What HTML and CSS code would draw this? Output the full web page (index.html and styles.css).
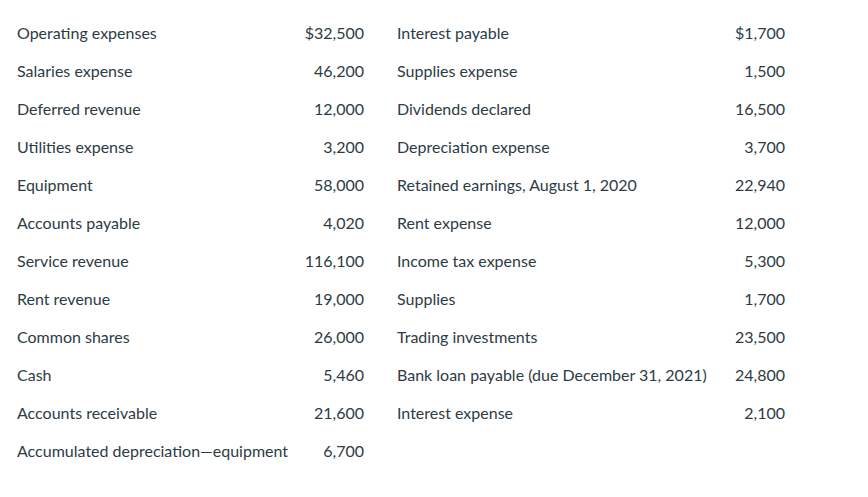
FILE: index.html
```html
<!DOCTYPE html>
<html>
<head>
<meta charset="utf-8">
<link rel="stylesheet" href="styles.css">
</head>
<body>
<div class="sheet">
  <div class="cell name">Operating expenses</div><div class="cell amt">$32,500</div><div class="cell name2">Interest payable</div><div class="cell amt2">$1,700</div>
  <div class="cell name">Salaries expense</div><div class="cell amt">46,200</div><div class="cell name2">Supplies expense</div><div class="cell amt2">1,500</div>
  <div class="cell name">Deferred revenue</div><div class="cell amt">12,000</div><div class="cell name2">Dividends declared</div><div class="cell amt2">16,500</div>
  <div class="cell name">Utilities expense</div><div class="cell amt">3,200</div><div class="cell name2">Depreciation expense</div><div class="cell amt2">3,700</div>
  <div class="cell name">Equipment</div><div class="cell amt">58,000</div><div class="cell name2">Retained earnings, August 1, 2020</div><div class="cell amt2">22,940</div>
  <div class="cell name">Accounts payable</div><div class="cell amt">4,020</div><div class="cell name2">Rent expense</div><div class="cell amt2">12,000</div>
  <div class="cell name">Service revenue</div><div class="cell amt">116,100</div><div class="cell name2">Income tax expense</div><div class="cell amt2">5,300</div>
  <div class="cell name">Rent revenue</div><div class="cell amt">19,000</div><div class="cell name2">Supplies</div><div class="cell amt2">1,700</div>
  <div class="cell name">Common shares</div><div class="cell amt">26,000</div><div class="cell name2">Trading investments</div><div class="cell amt2">23,500</div>
  <div class="cell name">Cash</div><div class="cell amt">5,460</div><div class="cell name2">Bank loan payable (due December 31, 2021)</div><div class="cell amt2">24,800</div>
  <div class="cell name">Accounts receivable</div><div class="cell amt">21,600</div><div class="cell name2">Interest expense</div><div class="cell amt2">2,100</div>
  <div class="cell name">Accumulated depreciation—equipment</div><div class="cell amt">6,700</div><div class="cell name2"></div><div class="cell amt2"></div>
</div>
</body>
</html>
```

FILE: styles.css
```css
html, body {
  margin: 0;
  padding: 0;
  background: #ffffff;
}

body {
  font-family: Lato, "Liberation Sans", sans-serif;
  font-size: 16px;
  color: #2d3b45;
}

.sheet {
  display: grid;
  grid-template-columns: 283px 64px 356px 65px;
  grid-auto-rows: 38px;
  padding: 13px 0 0 17px;
}

.cell {
  display: flex;
  align-items: center;
  white-space: nowrap;
}

.amt, .amt2 {
  justify-content: flex-end;
}

.name2 {
  padding-left: 33px;
}
```
